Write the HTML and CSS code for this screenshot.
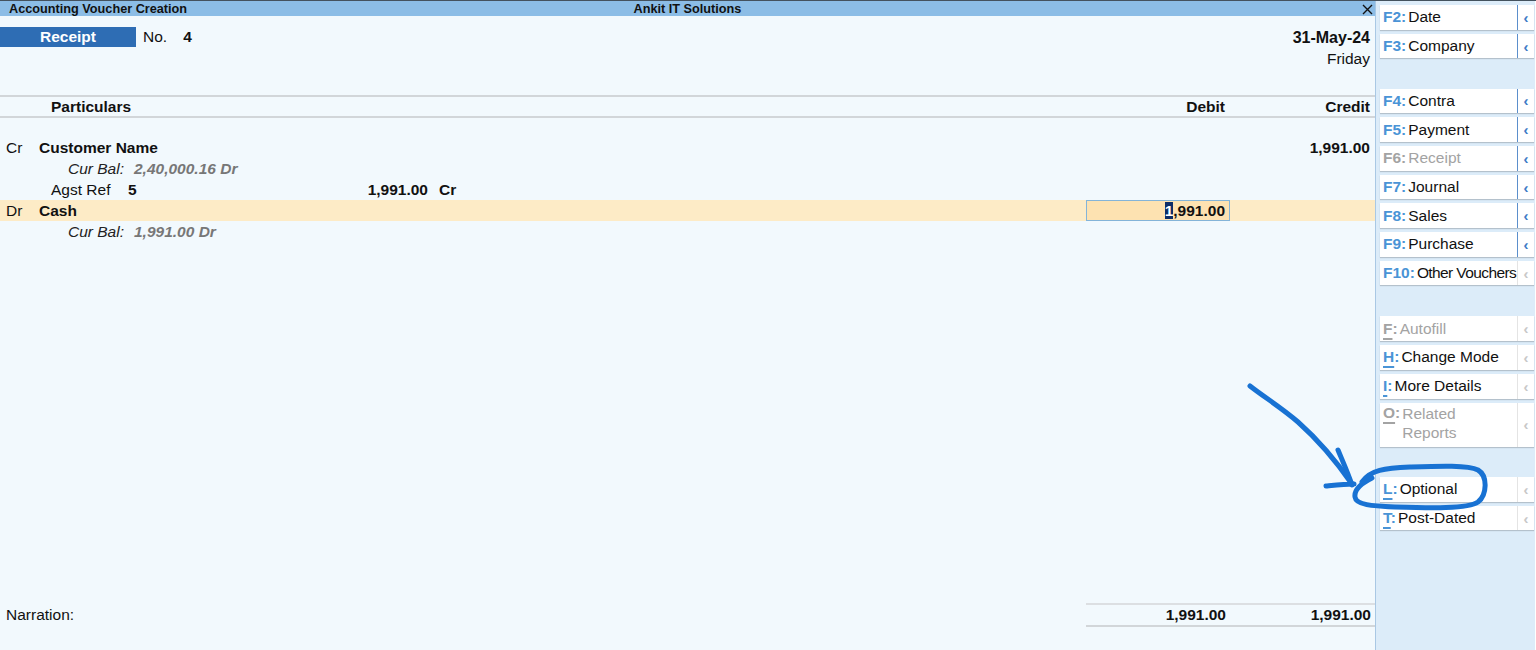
FILE: index.html
```html
<!DOCTYPE html>
<html lang="en">
<head>
    <meta charset="UTF-8">
    <title>Accounting Voucher Creation</title>
    <link rel="stylesheet" href="styles.css">
</head>
<body>
<div class="app">
    <div class="main">
        <div class="titlebar">
            <span class="t-left">Accounting Voucher Creation</span>
            <span class="t-center">Ankit IT Solutions</span>
            <span class="t-close">
                <svg width="11" height="11" viewBox="0 0 11 11"><path d="M1 1L10 10M10 1L1 10" stroke="#111" stroke-width="1.4"/></svg>
            </span>
        </div>

        <div class="vhead">
            <div class="vtype">
                <span class="vname">Receipt</span>
                <span class="vno">No.</span>
                <b>4</b>
            </div>
            <div class="vdate">
                <b>31-May-24</b>
                <span>Friday</span>
            </div>
        </div>

        <div class="row colhead">
            <div class="part">Particulars</div>
            <div class="amt">Debit</div>
            <div class="amt">Credit</div>
        </div>

        <div class="entries">
            <div class="row">
                <div class="cell"><span class="drcr">Cr</span><b>Customer Name</b></div>
                <div class="amt"></div>
                <div class="amt"><b>1,991.00</b></div>
            </div>
            <div class="row">
                <div class="cell bal"><i>Cur Bal:</i><b>2,40,000.16 Dr</b></div>
                <div class="amt"></div>
                <div class="amt"></div>
            </div>
            <div class="row">
                <div class="cell ref">
                    <span class="ref-name">Agst Ref</span><b class="ref-no">5</b><b class="ref-amt">1,991.00</b><b class="ref-cr">Cr</b>
                </div>
                <div class="amt"></div>
                <div class="amt"></div>
            </div>
            <div class="row active">
                <div class="cell"><span class="drcr">Dr</span><b>Cash</b></div>
                <div class="amt input"><b><span class="caret">1</span>,991.00</b></div>
                <div class="amt"></div>
            </div>
            <div class="row">
                <div class="cell bal"><i>Cur Bal:</i><b>1,991.00 Dr</b></div>
                <div class="amt"></div>
                <div class="amt"></div>
            </div>
        </div>

        <div class="foot">
            <div class="narr">Narration:</div>
            <div class="totals">
                <b>1,991.00</b>
                <b>1,991.00</b>
            </div>
        </div>
    </div>

    <div class="side">
        <div class="btn"><span class="lbl"><span class="key">F2:</span>Date</span><span class="chev on">&lsaquo;</span></div>
        <div class="btn"><span class="lbl"><span class="key">F3:</span>Company</span><span class="chev on">&lsaquo;</span></div>
        <div class="spacer s1"></div>
        <div class="btn"><span class="lbl"><span class="key">F4:</span>Contra</span><span class="chev on">&lsaquo;</span></div>
        <div class="btn"><span class="lbl"><span class="key">F5:</span>Payment</span><span class="chev on">&lsaquo;</span></div>
        <div class="btn off"><span class="lbl"><span class="key">F6:</span>Receipt</span><span class="chev on">&lsaquo;</span></div>
        <div class="btn"><span class="lbl"><span class="key">F7:</span>Journal</span><span class="chev on">&lsaquo;</span></div>
        <div class="btn"><span class="lbl"><span class="key">F8:</span>Sales</span><span class="chev on">&lsaquo;</span></div>
        <div class="btn"><span class="lbl"><span class="key">F9:</span>Purchase</span><span class="chev on">&lsaquo;</span></div>
        <div class="btn"><span class="lbl tight"><span class="key">F10:</span>Other Vouchers</span><span class="chev">&lsaquo;</span></div>
        <div class="spacer s2"></div>
        <div class="btn off"><span class="lbl"><span class="key"><u>F</u>:</span>Autofill</span><span class="chev">&lsaquo;</span></div>
        <div class="btn"><span class="lbl"><span class="key"><u>H</u>:</span>Change Mode</span><span class="chev">&lsaquo;</span></div>
        <div class="btn"><span class="lbl"><span class="key"><u>I</u>:</span>More Details</span><span class="chev">&lsaquo;</span></div>
        <div class="btn off tall"><span class="lbl"><span class="key"><u>O</u>:</span><span class="wrap">Related<br>Reports</span></span><span class="chev">&lsaquo;</span></div>
        <div class="spacer s3"></div>
        <div class="btn"><span class="lbl"><span class="key"><u>L</u>:</span>Optional</span><span class="chev">&lsaquo;</span></div>
        <div class="btn"><span class="lbl"><span class="key"><u>T</u>:</span>Post-Dated</span><span class="chev">&lsaquo;</span></div>
    </div>
</div>

<svg class="mark" width="1536" height="650" viewBox="0 0 1536 650">
    <path d="M1250,386 C1264,397 1282,408 1298,422 C1316,438 1332,455 1352,484" />
    <path d="M1338,450 C1343,462 1348,473 1352,485 M1326,486 C1336,485 1345,484 1354,484" />
    <path d="M1362,482 C1370,470 1385,468 1410,467 C1440,466 1468,465 1478,470 C1488,476 1487,495 1478,502 C1468,509 1430,508 1395,507 C1372,506 1356,505 1355,497 C1354,490 1362,483 1372,478" />
</svg>
</body>
</html>
```

FILE: styles.css
```css
body {
    margin: 0;
    font-family: "Liberation Sans", Arial, sans-serif;
    font-size: 15.5px;
    color: #111;
    position: relative;
}

.app {
    display: flex;
    height: 649px;
    border-top: 1px solid #44525e;
    overflow: hidden;
}

.main {
    width: 1375px;
    background-color: #f2f9fd;
    display: flex;
    flex-direction: column;
}

.titlebar {
    height: 14px;
    padding-top: 1px;
    background-color: #8cbde6;
    display: grid;
    grid-template-columns: 1fr auto 1fr;
    align-items: center;
    font-size: 12.7px;
    font-weight: bold;
    line-height: 15px;
}

.t-left {
    padding-left: 9px;
}

.t-close {
    justify-self: end;
    padding-right: 2px;
    display: flex;
    align-items: center;
}

.vhead {
    height: 79px;
    display: flex;
    justify-content: space-between;
}

.vtype {
    margin-top: 11px;
    display: flex;
    height: 20px;
    line-height: 20px;
}

.vname {
    width: 136px;
    background-color: #2e6db4;
    color: #fff;
    font-weight: bold;
    text-align: center;
}

.vno {
    margin-left: 7px;
    margin-right: 16px;
}

.vdate {
    margin-top: 11px;
    padding-right: 5px;
    display: flex;
    flex-direction: column;
    align-items: flex-end;
    line-height: 21px;
}

.vdate b {
    font-size: 16px;
}

.row {
    display: grid;
    grid-template-columns: 1fr 145px 145px;
    line-height: 21px;
    height: 21px;
}

.amt {
    text-align: right;
    padding-right: 5px;
}

.colhead {
    border-top: 2px solid #d2d6d9;
    border-bottom: 2px solid #d2d6d9;
    height: 19px;
    line-height: 19px;
    font-weight: bold;
}

.part {
    padding-left: 51px;
}

.entries {
    margin-top: 19px;
}

.cell {
    padding-left: 6px;
    white-space: nowrap;
}

.drcr {
    display: inline-block;
    width: 33px;
}

.bal {
    padding-left: 68px;
}

.bal i {
    color: #222;
    margin-right: 10px;
}

.bal b {
    font-style: italic;
    color: #777;
}

.ref {
    padding-left: 51px;
}

.ref-name {
    display: inline-block;
    width: 77px;
}

.ref-no {
    display: inline-block;
    width: 12px;
}

.ref-amt {
    display: inline-block;
    width: 288px;
    text-align: right;
}

.ref-cr {
    margin-left: 11px;
}

.active {
    background-color: #fdebc6;
}

.input {
    border: 1px solid #84b4d8;
    background-color: #fde2b1;
    padding-right: 4px;
    line-height: 19px;
    margin-left: 1px;
}

.caret {
    background-color: #0c2d68;
    color: #fff;
}

.foot {
    margin-top: auto;
    margin-bottom: 23px;
    display: grid;
    grid-template-columns: 1fr 290px;
}

.narr {
    padding-left: 6px;
    line-height: 20px;
    padding-top: 2px;
}

.totals {
    display: grid;
    grid-template-columns: 145px 145px;
    border-top: 2px solid #dcdfe2;
    border-bottom: 2px solid #d2d6d9;
    line-height: 20px;
    margin-left: 1px;
}

.totals b {
    text-align: right;
    padding-right: 5px;
}

.side {
    width: 160px;
    border-left: 1px solid #a9c8e4;
    background-color: #dcecf9;
    padding: 4px 1px 0 4px;
    box-sizing: border-box;
    flex: none;
}

.btn {
    display: flex;
    height: 24.7px;
    margin-bottom: 4px;
    background-color: #fff;
    box-shadow: 0 1px 1px rgba(0, 0, 0, 0.18);
}

.btn.tall {
    height: 44.7px;
}

.s1 {
    height: 26.25px;
}

.s2 {
    height: 27px;
}

.s3 {
    height: 25.8px;
}

.lbl {
    flex: 1;
    display: flex;
    align-items: center;
    padding-left: 3px;
    white-space: nowrap;
}

.tight {
    letter-spacing: -0.6px;
}

.tight .key {
    letter-spacing: 0;
}

.key {
    color: #4a94d6;
    font-weight: bold;
    margin-right: 2px;
}

.key u {
    text-decoration-thickness: 2px;
    text-underline-offset: 4px;
}

.wrap {
    line-height: 19px;
}

.tall .lbl {
    align-items: flex-start;
    padding-top: 1px;
}

.off .lbl {
    color: #a3a3a3;
}

.off .key {
    color: #a3a3a3;
}

.chev {
    width: 16px;
    border-left: 1px solid #e4e4e4;
    color: #c8c8c8;
    display: flex;
    align-items: center;
    justify-content: center;
    font-size: 15px;
    font-weight: bold;
}

.chev.on {
    border-left-color: #5b8fcc;
    color: #3d7bc6;
}

.mark {
    position: absolute;
    left: 0;
    top: 0;
    pointer-events: none;
}

.mark path {
    fill: none;
    stroke: #1872d3;
    stroke-width: 5;
    stroke-linecap: round;
    stroke-linejoin: round;
}
```
